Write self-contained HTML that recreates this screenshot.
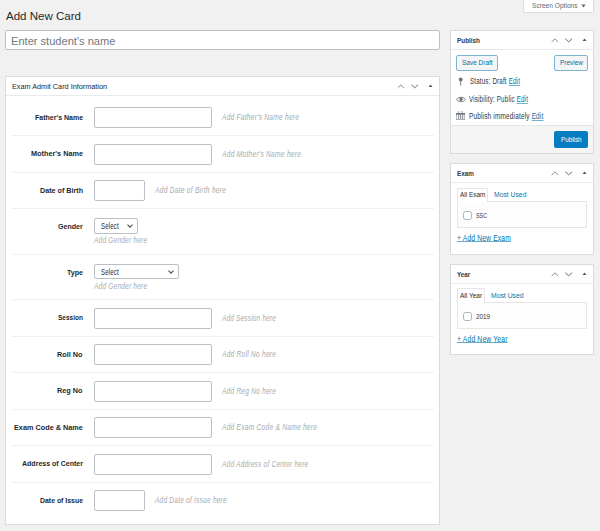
<!DOCTYPE html>
<html><head><meta charset="utf-8"><style>
html,body{margin:0;padding:0;}
body{width:600px;height:531px;background:#f1f1f1;position:relative;overflow:hidden;font-family:"Liberation Sans",sans-serif;}
.t{position:absolute;white-space:nowrap;transform-origin:0 0;}
.r{position:absolute;}
</style></head><body>
<div class="t" style="left:6.25px;top:10.51px;font-size:11.8px;line-height:11.8px;color:#23282d;font-weight:normal;font-style:normal;transform:scaleX(0.9774);">Add New Card</div>
<div class="r" style="left:523px;top:-1px;width:71px;height:14px;background:#fff;border:1px solid #dcdcde;border-top:none;border-radius:0 0 2px 2px;box-sizing:border-box;"></div>
<div class="t" style="left:531.70px;top:2.07px;font-size:7.0px;line-height:7.0px;color:#646970;font-weight:normal;font-style:normal;transform:scaleX(0.9451);">Screen Options</div>
<svg class="r" style="left:581px;top:4px" width="5" height="4" viewBox="0 0 5 4"><path d="M0.3 0.6 L4.7 0.6 L2.5 3.4 Z" fill="#646970"/></svg>
<div class="r" style="left:5px;top:30px;width:435px;height:20px;background:#fff;border:1px solid #bcc0c4;border-radius:2px;box-sizing:border-box;"></div>
<div class="t" style="left:11.30px;top:34.98px;font-size:11.6px;line-height:11.6px;color:#72777c;font-weight:normal;font-style:normal;transform:scaleX(0.9555);">Enter student's name</div>
<div class="r" style="left:5px;top:76px;width:435px;height:449px;background:#fff;border:1px solid #dadbdc;box-sizing:border-box;"></div>
<div class="r" style="left:6px;top:95px;width:433px;height:1px;background:#e9eaec;"></div>
<div class="t" style="left:12.30px;top:83.07px;font-size:7.6px;line-height:7.6px;color:#23282d;font-weight:normal;font-style:normal;transform:scaleX(0.9581);">Exam Admit Card Information</div>
<svg class="r" style="left:397px;top:84px" width="8" height="5" viewBox="0 0 8 5"><path d="M0.6 4 L3.9 0.9 L7.2 4" fill="none" stroke="#8c8f94" stroke-width="1"/></svg>
<svg class="r" style="left:410.5px;top:84px" width="8" height="5" viewBox="0 0 8 5"><path d="M0.3 0.7 L3.7 3.8 L7.1 0.7" fill="none" stroke="#646970" stroke-width="1"/></svg>
<svg class="r" style="left:428px;top:84px" width="5" height="4" viewBox="0 0 5 4"><path d="M0.5 3.1 L4.5 3.1 L2.5 0.6 Z" fill="#50575e"/></svg>
<div class="r" style="left:12px;top:135px;width:422px;height:1px;background:#f0f0f1;"></div>
<div class="r" style="left:12px;top:172px;width:422px;height:1px;background:#f0f0f1;"></div>
<div class="r" style="left:12px;top:208px;width:422px;height:1px;background:#f0f0f1;"></div>
<div class="r" style="left:12px;top:254px;width:422px;height:1px;background:#f0f0f1;"></div>
<div class="r" style="left:12px;top:299px;width:422px;height:1px;background:#f0f0f1;"></div>
<div class="r" style="left:12px;top:336px;width:422px;height:1px;background:#f0f0f1;"></div>
<div class="r" style="left:12px;top:372px;width:422px;height:1px;background:#f0f0f1;"></div>
<div class="r" style="left:12px;top:409px;width:422px;height:1px;background:#f0f0f1;"></div>
<div class="r" style="left:12px;top:445px;width:422px;height:1px;background:#f0f0f1;"></div>
<div class="r" style="left:12px;top:482px;width:422px;height:1px;background:#f0f0f1;"></div>
<div class="t" style="left:34.60px;top:113.95px;font-size:7.5px;line-height:7.5px;color:#23282d;font-weight:bold;font-style:normal;transform:scaleX(0.9379);">Father's Name</div>
<div class="r" style="left:94px;top:107px;width:118px;height:21px;background:#fff;border:1px solid #bcc0c4;border-radius:2px;box-sizing:border-box;"></div>
<div class="t" style="left:222.03px;top:113.27px;font-size:8.3px;line-height:8.3px;color:#a7aaad;font-weight:normal;font-style:italic;transform:scaleX(0.7979);letter-spacing:0.3px;">Add Father's Name here</div>
<div class="t" style="left:30.80px;top:150.45px;font-size:7.5px;line-height:7.5px;color:#23282d;font-weight:bold;font-style:normal;transform:scaleX(0.9727);">Mother's Name</div>
<div class="r" style="left:94px;top:144px;width:118px;height:21px;background:#fff;border:1px solid #bcc0c4;border-radius:2px;box-sizing:border-box;"></div>
<div class="t" style="left:222.03px;top:149.77px;font-size:8.3px;line-height:8.3px;color:#a7aaad;font-weight:normal;font-style:italic;transform:scaleX(0.8033);letter-spacing:0.3px;">Add Mother's Name here</div>
<div class="t" style="left:39.70px;top:186.95px;font-size:7.5px;line-height:7.5px;color:#23282d;font-weight:bold;font-style:normal;transform:scaleX(0.9578);">Date of Birth</div>
<div class="r" style="left:94px;top:180px;width:51px;height:21px;background:#fff;border:1px solid #bcc0c4;border-radius:2px;box-sizing:border-box;"></div>
<div class="t" style="left:155.33px;top:186.27px;font-size:8.3px;line-height:8.3px;color:#a7aaad;font-weight:normal;font-style:italic;transform:scaleX(0.8025);letter-spacing:0.3px;">Add Date of Birth here</div>
<div class="t" style="left:58.10px;top:223.45px;font-size:7.5px;line-height:7.5px;color:#23282d;font-weight:bold;font-style:normal;transform:scaleX(0.9407);">Gender</div>
<div class="r" style="left:94px;top:218px;width:44px;height:16px;background:#fff;border:1px solid #bcc0c4;border-radius:2px;box-sizing:border-box;"></div>
<div class="t" style="left:100.60px;top:221.97px;font-size:8.3px;line-height:8.3px;color:#23282d;font-weight:normal;font-style:normal;transform:scaleX(0.7396);letter-spacing:0.2px;">Select</div>
<svg class="r" style="left:127px;top:224.3px" width="6" height="4" viewBox="0 0 6 4"><path d="M0.5 0.6 L3 3.1 L5.5 0.6" fill="none" stroke="#50575e" stroke-width="1.2"/></svg>
<div class="t" style="left:93.82px;top:236.47px;font-size:8.3px;line-height:8.3px;color:#a7aaad;font-weight:normal;font-style:italic;transform:scaleX(0.7819);letter-spacing:0.3px;">Add Gender here</div>
<div class="t" style="left:66.80px;top:268.95px;font-size:7.5px;line-height:7.5px;color:#23282d;font-weight:bold;font-style:normal;transform:scaleX(0.9440);">Type</div>
<div class="r" style="left:94px;top:264px;width:85px;height:15px;background:#fff;border:1px solid #bcc0c4;border-radius:2px;box-sizing:border-box;"></div>
<div class="t" style="left:100.60px;top:268.07px;font-size:8.3px;line-height:8.3px;color:#23282d;font-weight:normal;font-style:normal;transform:scaleX(0.7396);letter-spacing:0.2px;">Select</div>
<svg class="r" style="left:168px;top:269.8px" width="6" height="4" viewBox="0 0 6 4"><path d="M0.5 0.6 L3 3.1 L5.5 0.6" fill="none" stroke="#50575e" stroke-width="1.2"/></svg>
<div class="t" style="left:93.82px;top:281.97px;font-size:8.3px;line-height:8.3px;color:#a7aaad;font-weight:normal;font-style:italic;transform:scaleX(0.7819);letter-spacing:0.3px;">Add Gender here</div>
<div class="t" style="left:57.80px;top:314.45px;font-size:7.5px;line-height:7.5px;color:#23282d;font-weight:bold;font-style:normal;transform:scaleX(0.8692);">Session</div>
<div class="r" style="left:94px;top:308px;width:118px;height:21px;background:#fff;border:1px solid #bcc0c4;border-radius:2px;box-sizing:border-box;"></div>
<div class="t" style="left:222.02px;top:313.77px;font-size:8.3px;line-height:8.3px;color:#a7aaad;font-weight:normal;font-style:italic;transform:scaleX(0.7695);letter-spacing:0.3px;">Add Session here</div>
<div class="t" style="left:57.40px;top:350.95px;font-size:7.5px;line-height:7.5px;color:#23282d;font-weight:bold;font-style:normal;transform:scaleX(0.9676);">Roll No</div>
<div class="r" style="left:94px;top:344px;width:118px;height:21px;background:#fff;border:1px solid #bcc0c4;border-radius:2px;box-sizing:border-box;"></div>
<div class="t" style="left:222.03px;top:350.27px;font-size:8.3px;line-height:8.3px;color:#a7aaad;font-weight:normal;font-style:italic;transform:scaleX(0.7971);letter-spacing:0.3px;">Add Roll No here</div>
<div class="t" style="left:57.40px;top:387.45px;font-size:7.5px;line-height:7.5px;color:#23282d;font-weight:bold;font-style:normal;transform:scaleX(0.9676);">Reg No</div>
<div class="r" style="left:94px;top:381px;width:118px;height:21px;background:#fff;border:1px solid #bcc0c4;border-radius:2px;box-sizing:border-box;"></div>
<div class="t" style="left:222.03px;top:386.77px;font-size:8.3px;line-height:8.3px;color:#a7aaad;font-weight:normal;font-style:italic;transform:scaleX(0.7884);letter-spacing:0.3px;">Add Reg No here</div>
<div class="t" style="left:13.90px;top:423.95px;font-size:7.5px;line-height:7.5px;color:#23282d;font-weight:bold;font-style:normal;transform:scaleX(0.9723);">Exam Code &amp; Name</div>
<div class="r" style="left:94px;top:417px;width:118px;height:21px;background:#fff;border:1px solid #bcc0c4;border-radius:2px;box-sizing:border-box;"></div>
<div class="t" style="left:222.03px;top:423.27px;font-size:8.3px;line-height:8.3px;color:#a7aaad;font-weight:normal;font-style:italic;transform:scaleX(0.7991);letter-spacing:0.3px;">Add Exam Code &amp; Name here</div>
<div class="t" style="left:21.90px;top:460.45px;font-size:7.5px;line-height:7.5px;color:#23282d;font-weight:bold;font-style:normal;transform:scaleX(0.9367);">Address of Center</div>
<div class="r" style="left:94px;top:454px;width:118px;height:21px;background:#fff;border:1px solid #bcc0c4;border-radius:2px;box-sizing:border-box;"></div>
<div class="t" style="left:222.02px;top:459.77px;font-size:8.3px;line-height:8.3px;color:#a7aaad;font-weight:normal;font-style:italic;transform:scaleX(0.7828);letter-spacing:0.3px;">Add Address of Center here</div>
<div class="t" style="left:39.80px;top:496.95px;font-size:7.5px;line-height:7.5px;color:#23282d;font-weight:bold;font-style:normal;transform:scaleX(0.9212);">Date of Issue</div>
<div class="r" style="left:94px;top:490px;width:51px;height:21px;background:#fff;border:1px solid #bcc0c4;border-radius:2px;box-sizing:border-box;"></div>
<div class="t" style="left:155.33px;top:496.27px;font-size:8.3px;line-height:8.3px;color:#a7aaad;font-weight:normal;font-style:italic;transform:scaleX(0.7859);letter-spacing:0.3px;">Add Date of Issue here</div>
<div class="r" style="left:450px;top:30px;width:144px;height:124px;background:#fff;border:1px solid #dadbdc;box-sizing:border-box;"></div>
<div class="r" style="left:451px;top:49px;width:142px;height:1px;background:#e9eaec;"></div>
<div class="t" style="left:457.00px;top:37.17px;font-size:7.6px;line-height:7.6px;color:#33383d;font-weight:bold;font-style:normal;transform:scaleX(0.8381);">Publish</div>
<svg class="r" style="left:551px;top:38px" width="8" height="5" viewBox="0 0 8 5"><path d="M0.6 4 L3.9 0.9 L7.2 4" fill="none" stroke="#8c8f94" stroke-width="1"/></svg>
<svg class="r" style="left:564.5px;top:38px" width="8" height="5" viewBox="0 0 8 5"><path d="M0.3 0.7 L3.7 3.8 L7.1 0.7" fill="none" stroke="#646970" stroke-width="1"/></svg>
<svg class="r" style="left:582px;top:38px" width="5" height="4" viewBox="0 0 5 4"><path d="M0.5 3.1 L4.5 3.1 L2.5 0.6 Z" fill="#50575e"/></svg>
<div class="r" style="left:456px;top:55px;width:42px;height:15.5px;background:#f3f5f6;border:1px solid #7fb3d0;border-radius:2px;box-sizing:border-box;"></div>
<div class="t" style="left:461.70px;top:59.27px;font-size:7.0px;line-height:7.0px;color:#0071a1;font-weight:normal;font-style:normal;transform:scaleX(0.9254);">Save Draft</div>
<div class="r" style="left:554px;top:55px;width:34px;height:15.5px;background:#f3f5f6;border:1px solid #7fb3d0;border-radius:2px;box-sizing:border-box;"></div>
<div class="t" style="left:559.70px;top:59.27px;font-size:7.0px;line-height:7.0px;color:#0071a1;font-weight:normal;font-style:normal;transform:scaleX(0.9230);">Preview</div>
<svg class="r" style="left:457px;top:77px" width="8" height="9" viewBox="0 0 8 9"><circle cx="3.7" cy="2.4" r="2" fill="#72777c"/><path d="M3.7 3 L3.7 8.5" stroke="#72777c" stroke-width="1"/></svg>
<div class="t" style="left:469.60px;top:76.97px;font-size:8.3px;line-height:8.3px;color:#32373c;font-weight:normal;font-style:normal;transform:scaleX(0.7545);letter-spacing:0.2px;">Status: Draft <span style="color:#0073aa;text-decoration:underline;text-decoration-color:rgba(0,115,170,0.55);text-underline-offset:0.5px">Edit</span></div>
<svg class="r" style="left:455.5px;top:96px" width="10" height="7" viewBox="0 0 10 7"><path d="M0.6 3.5 C2 0.6 8 0.6 9.4 3.5 C8 6.4 2 6.4 0.6 3.5 Z" fill="none" stroke="#72777c" stroke-width="1"/><circle cx="5" cy="3.3" r="1.7" fill="#72777c"/></svg>
<div class="t" style="left:469.40px;top:95.37px;font-size:8.3px;line-height:8.3px;color:#32373c;font-weight:normal;font-style:normal;transform:scaleX(0.7546);letter-spacing:0.2px;">Visibility: Public <span style="color:#0073aa;text-decoration:underline;text-decoration-color:rgba(0,115,170,0.55);text-underline-offset:0.5px">Edit</span></div>
<svg class="r" style="left:456px;top:111px" width="9" height="9" viewBox="0 0 9 9"><rect x="2.3" y="0" width="1" height="2.2" fill="#72777c" opacity="0.7"/><rect x="5.6" y="0" width="1" height="2.2" fill="#72777c" opacity="0.7"/><rect x="0" y="2" width="9" height="1.7" fill="#72777c"/><rect x="0" y="2" width="0.8" height="6.8" fill="#72777c" opacity="0.6"/><rect x="8.2" y="2" width="0.8" height="6.8" fill="#72777c" opacity="0.6"/><rect x="0" y="8" width="9" height="0.8" fill="#72777c" opacity="0.7"/><rect x="2.3" y="3.5" width="0.9" height="4.6" fill="#72777c"/><rect x="4.3" y="3.5" width="0.9" height="4.6" fill="#72777c"/><rect x="6.3" y="3.5" width="0.9" height="4.6" fill="#72777c"/></svg>
<div class="t" style="left:469.40px;top:112.47px;font-size:8.3px;line-height:8.3px;color:#32373c;font-weight:normal;font-style:normal;transform:scaleX(0.7819);letter-spacing:0.2px;">Publish immediately <span style="color:#0073aa;text-decoration:underline;text-decoration-color:rgba(0,115,170,0.55);text-underline-offset:0.5px">Edit</span></div>
<div class="r" style="left:451px;top:125px;width:142px;height:28px;background:#f5f5f5;border-top:1px solid #e6e6e6;box-sizing:border-box;"></div>
<div class="r" style="left:554px;top:131px;width:34px;height:17px;background:#067dc2;border-radius:2px;"></div>
<div class="t" style="left:560.80px;top:136.07px;font-size:7.0px;line-height:7.0px;color:#fff;font-weight:normal;font-style:normal;transform:scaleX(0.8972);">Publish</div>
<div class="r" style="left:450px;top:163px;width:144px;height:91.5px;background:#fff;border:1px solid #dadbdc;box-sizing:border-box;"></div>
<div class="r" style="left:451px;top:182px;width:142px;height:1px;background:#e9eaec;"></div>
<div class="t" style="left:457.00px;top:170.17px;font-size:7.6px;line-height:7.6px;color:#33383d;font-weight:bold;font-style:normal;transform:scaleX(0.8285);">Exam</div>
<svg class="r" style="left:551px;top:171px" width="8" height="5" viewBox="0 0 8 5"><path d="M0.6 4 L3.9 0.9 L7.2 4" fill="none" stroke="#8c8f94" stroke-width="1"/></svg>
<svg class="r" style="left:564.5px;top:171px" width="8" height="5" viewBox="0 0 8 5"><path d="M0.3 0.7 L3.7 3.8 L7.1 0.7" fill="none" stroke="#646970" stroke-width="1"/></svg>
<svg class="r" style="left:582px;top:171px" width="5" height="4" viewBox="0 0 5 4"><path d="M0.5 3.1 L4.5 3.1 L2.5 0.6 Z" fill="#50575e"/></svg>
<div class="r" style="left:457px;top:201px;width:130px;height:26.5px;background:#fdfdfd;border:1px solid #e6e6e6;box-sizing:border-box;"></div>
<div class="r" style="left:457px;top:187.5px;width:31px;height:14.5px;background:#fff;border:1px solid #e6e6e6;border-bottom:none;box-sizing:border-box;"></div>
<div class="t" style="left:459.90px;top:191.27px;font-size:7.0px;line-height:7.0px;color:#23282d;font-weight:normal;font-style:normal;transform:scaleX(0.9162);">All Exam</div>
<div class="t" style="left:493.60px;top:191.27px;font-size:7.0px;line-height:7.0px;color:#0073aa;font-weight:normal;font-style:normal;transform:scaleX(0.9685);">Most Used</div>
<div class="r" style="left:463px;top:211px;width:9px;height:9px;background:#fff;border:1px solid #adb2b7;border-radius:2.5px;box-sizing:border-box;"></div>
<div class="t" style="left:475.90px;top:212.47px;font-size:7.0px;line-height:7.0px;color:#32373c;font-weight:normal;font-style:normal;transform:scaleX(0.7643);">SSC</div>
<div class="t" style="left:457.30px;top:234.17px;font-size:8.3px;line-height:8.3px;color:#0073aa;font-weight:normal;font-style:normal;transform:scaleX(0.8091);letter-spacing:0.2px;"><span style="text-decoration:underline;text-decoration-color:rgba(0,115,170,0.6);text-underline-offset:0px">+ Add New Exam</span></div>
<div class="r" style="left:450px;top:264px;width:144px;height:91px;background:#fff;border:1px solid #dadbdc;box-sizing:border-box;"></div>
<div class="r" style="left:451px;top:283px;width:142px;height:1px;background:#e9eaec;"></div>
<div class="t" style="left:457.00px;top:271.17px;font-size:7.6px;line-height:7.6px;color:#33383d;font-weight:bold;font-style:normal;transform:scaleX(0.8158);">Year</div>
<svg class="r" style="left:551px;top:272px" width="8" height="5" viewBox="0 0 8 5"><path d="M0.6 4 L3.9 0.9 L7.2 4" fill="none" stroke="#8c8f94" stroke-width="1"/></svg>
<svg class="r" style="left:564.5px;top:272px" width="8" height="5" viewBox="0 0 8 5"><path d="M0.3 0.7 L3.7 3.8 L7.1 0.7" fill="none" stroke="#646970" stroke-width="1"/></svg>
<svg class="r" style="left:582px;top:272px" width="5" height="4" viewBox="0 0 5 4"><path d="M0.5 3.1 L4.5 3.1 L2.5 0.6 Z" fill="#50575e"/></svg>
<div class="r" style="left:457px;top:302px;width:130px;height:26.5px;background:#fdfdfd;border:1px solid #e6e6e6;box-sizing:border-box;"></div>
<div class="r" style="left:457px;top:288px;width:28px;height:15px;background:#fff;border:1px solid #e6e6e6;border-bottom:none;box-sizing:border-box;"></div>
<div class="t" style="left:459.90px;top:292.27px;font-size:7.0px;line-height:7.0px;color:#23282d;font-weight:normal;font-style:normal;transform:scaleX(0.9308);">All Year</div>
<div class="t" style="left:490.50px;top:292.27px;font-size:7.0px;line-height:7.0px;color:#0073aa;font-weight:normal;font-style:normal;transform:scaleX(0.9715);">Most Used</div>
<div class="r" style="left:463px;top:312px;width:9px;height:9px;background:#fff;border:1px solid #adb2b7;border-radius:2.5px;box-sizing:border-box;"></div>
<div class="t" style="left:475.90px;top:313.47px;font-size:7.0px;line-height:7.0px;color:#32373c;font-weight:normal;font-style:normal;transform:scaleX(0.9053);">2019</div>
<div class="t" style="left:457.30px;top:335.17px;font-size:8.3px;line-height:8.3px;color:#0073aa;font-weight:normal;font-style:normal;transform:scaleX(0.8158);letter-spacing:0.2px;"><span style="text-decoration:underline;text-decoration-color:rgba(0,115,170,0.6);text-underline-offset:0px">+ Add New Year</span></div>
</body></html>
